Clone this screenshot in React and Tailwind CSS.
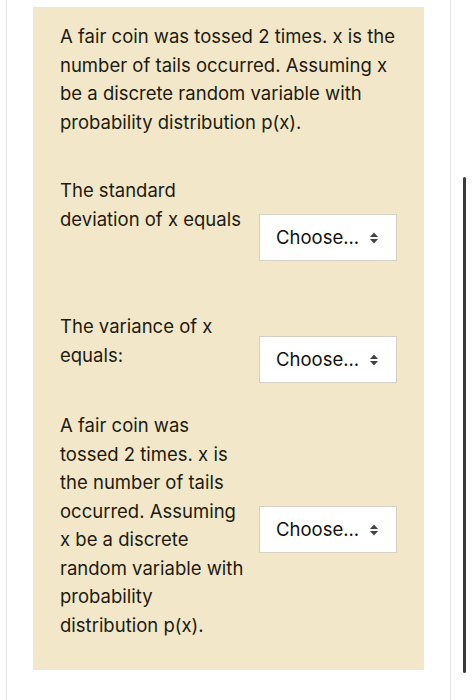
import React from 'react';

// Up/down arrow glyph of the native select
function SelectArrows() {
  return (
    <svg width="8" height="12" viewBox="0 0 8 12" className="ml-auto">
      <path d="M4 0.5 L8 5 H0 Z" fill="#444" />
      <path d="M4 11.5 L8 7 H0 Z" fill="#444" />
    </svg>
  );
}

function ChooseBox({ top }) {
  return (
    <div
      className={`${top} w-[138px] h-[47px] shrink-0 bg-white border border-[#d6d1c4] flex items-center pl-[16px] pr-[18px] text-[18.5px] text-[#111]`}
    >
      <span>Choose...</span>
      <SelectArrows />
    </div>
  );
}

function MatchRow({ lines, selectTop, className }) {
  return (
    <div className={`flex ${className}`}>
      <div className="w-[199px] shrink-0 whitespace-nowrap">
        {lines.map((line, i) => (
          <div key={i}>{line}</div>
        ))}
      </div>
      <ChooseBox top={selectTop} />
    </div>
  );
}

export default function App() {
  return (
    <div
      className="w-[472px] h-[700px] bg-white flex overflow-hidden"
      style={{ fontFamily: 'Inter, "Liberation Sans", Arial, sans-serif' }}
    >
      <div className="ml-[6px] w-[445px] h-full border-x border-[#e3e3e3] pl-[26px] pt-[7px]">
        <div className="w-[391px] bg-[#f2e8c9] pl-[27px] pr-[20px] pt-[15px] pb-[31px] text-[18.5px] leading-[28.5px] text-[#1e1a10]">
          <div className="whitespace-nowrap">
            <div>A fair coin was tossed 2 times. x is the</div>
            <div>number of tails occurred. Assuming x</div>
            <div>be a discrete random variable with</div>
            <div>probability distribution p(x).</div>
          </div>

          <MatchRow
            className="mt-[40px]"
            lines={['The standard', 'deviation of x equals']}
            selectTop="mt-[38px]"
          />
          <MatchRow
            className="mt-[51px]"
            lines={['The variance of x', 'equals:']}
            selectTop="mt-[24px]"
          />
          <MatchRow
            className="mt-[28px]"
            lines={[
              'A fair coin was',
              'tossed 2 times. x is',
              'the number of tails',
              'occurred. Assuming',
              'x be a discrete',
              'random variable with',
              'probability',
              'distribution p(x).',
            ]}
            selectTop="mt-[95px]"
          />
        </div>
      </div>
      {/* scrollbar thumb */}
      <div className="ml-[12px] mt-[177px] w-[3px] h-[496px] rounded-full bg-[#3a3a3a]" />
    </div>
  );
}
